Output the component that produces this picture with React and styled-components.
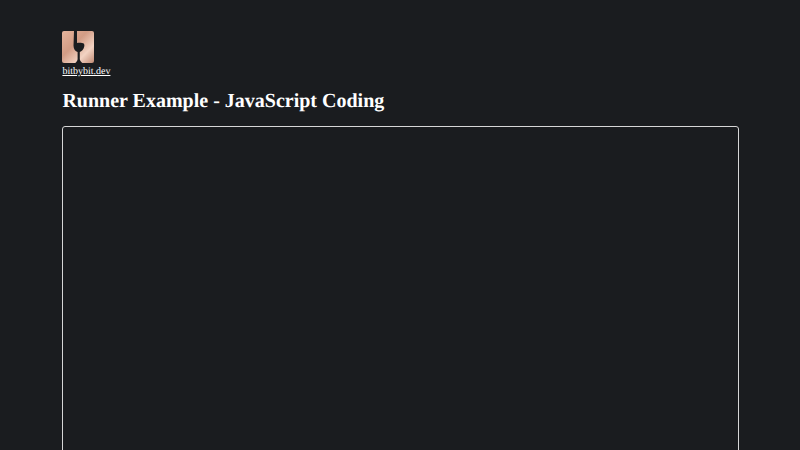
import React from "react";
import styled, { createGlobalStyle } from "styled-components";

const Global = createGlobalStyle`
  html, body { margin: 0; height: 450px; overflow: hidden; background: #1a1c1f; }
`;
const Page = styled.main`
  display: flex;
  flex-direction: column;
  align-items: flex-start;
  box-sizing: border-box;
  height: 450px;
  overflow: hidden;
  padding: 31px 61px 0 62.4px;
  font-family: "Liberation Serif", serif;
  text-rendering: geometricPrecision;
  color: #fff;
`;
const Brand = styled.a`
  display: block;
  color: #fff;
  font-size: 10px;
  line-height: 14px;
  text-decoration: underline;
`;
const LogoMark = styled.svg`
  display: block;
  width: 32px;
  height: 32px;
  margin-bottom: 2px;
`;
const Title = styled.h1`
  margin: 10px 0 12px;
  font-size: 20px;
  line-height: 25px;
  font-weight: 700;
  color: #fff;
`;
const Stage = styled.div`
  flex: none;
  align-self: stretch;
  height: 600px;
  box-sizing: border-box;
  border: 1px solid #d6d6d6;
  border-radius: 3px;
`;

function Logo() {
  return (
    <LogoMark viewBox="0 0 32 32" aria-hidden="true">
      <defs>
        <linearGradient id="copper" x1="0" y1="0" x2="1" y2="1">
          <stop offset="0" stopColor="#e6b49c" />
          <stop offset="0.4" stopColor="#d29c85" />
          <stop offset="0.72" stopColor="#f2d3c3" />
          <stop offset="1" stopColor="#c08a74" />
        </linearGradient>
      </defs>
      <rect width="32" height="32" rx="2" fill="url(#copper)" />
      <path
        d="M12 0h3v12c2.500-.4 5.500-.2 7 .8.500 1 .5 2 .2 3-.7 2.800-2.600 4.700-4.400 5.200v7c0 1.500 1 2.700 2.500 4h-7c1.500-1.300 2.300-2.500 2.300-4v-7c-2.200-.6-4.100-3-4.100-6.300z"
        fill="#1a1c1f"
      />
    </LogoMark>
  );
}

export default function App() {
  return (
    <>
      <Global />
      <Page>
        <Brand href="#">
          <Logo />
          bitbybit.dev
        </Brand>
        <Title>Runner Example - JavaScript Coding</Title>
        <Stage />
      </Page>
    </>
  );
}
